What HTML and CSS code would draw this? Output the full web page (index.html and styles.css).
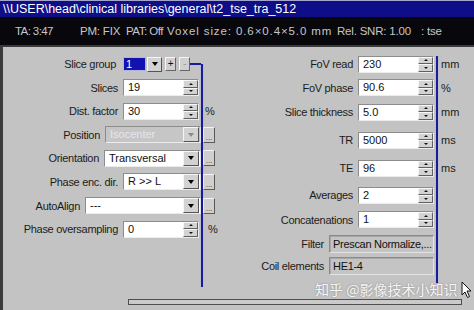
FILE: index.html
```html
<!DOCTYPE html>
<html lang="en">
<head>
    <meta charset="UTF-8">
    <meta name="viewport" content="width=device-width, initial-scale=1.0">
    <title>t2_tse_tra_512</title>
    <link rel="stylesheet" href="styles.css">
</head>
<body>
    <div class="window">
        <div class="titlebar">\\USER\head\clinical libraries\general\t2_tse_tra_512</div>

        <div class="infobar">
            <span class="ta">TA: 3:47</span>
            <span class="pm">PM: FIX</span>
            <span class="pat">PAT: Off</span>
            <span class="voxel">Voxel size: 0.6×0.4×5.0 mm</span>
            <span class="snr">Rel. SNR: 1.00</span>
            <span>: tse</span>
        </div>

        <div class="panel">
            <div class="columns">
                <!-- left column -->
                <div class="col col-left">
                    <div class="row">
                        <span class="label">Slice group</span>
                        <div class="group">
                            <div class="sel">1</div>
                            <div class="drop-btn"></div>
                            <div class="btn">+</div>
                            <div class="btn off">-</div>
                            <div class="conn"></div>
                        </div>
                    </div>

                    <div class="row">
                        <span class="label">Slices</span>
                        <div class="field w76"><span class="val">19</span><div class="spin"><i class="up"></i><i class="down"></i></div></div>
                    </div>

                    <div class="row">
                        <span class="label">Dist. factor</span>
                        <div class="field w76"><span class="val">30</span><div class="spin"><i class="up"></i><i class="down"></i></div></div>
                    </div>
                    <div class="aux unit">%</div>

                    <div class="row">
                        <span class="label">Position</span>
                        <div class="field combo disabled w96"><span class="val">Isocenter</span><div class="drop"></div></div>
                    </div>
                    <div class="aux"><div class="more">...</div></div>

                    <div class="row">
                        <span class="label">Orientation</span>
                        <div class="field combo w97"><span class="val">Transversal</span><div class="drop"></div></div>
                    </div>
                    <div class="aux"><div class="more">...</div></div>

                    <div class="row">
                        <span class="label">Phase enc. dir.</span>
                        <div class="field combo w78"><span class="val">R &gt;&gt; L</span><div class="drop"></div></div>
                    </div>
                    <div class="aux"><div class="more">...</div></div>

                    <div class="row">
                        <span class="label">AutoAlign</span>
                        <div class="field combo w116"><span class="val">---</span><div class="drop"></div></div>
                    </div>
                    <div class="aux"><div class="more">...</div></div>

                    <div class="row">
                        <span class="label">Phase oversampling</span>
                        <div class="field w76"><span class="val">0</span><div class="spin"><i class="up"></i><i class="down"></i></div></div>
                    </div>
                    <div class="aux unit far">%</div>

                    <div class="vline vline-left"></div>
                </div>

                <!-- right column -->
                <div class="col col-right">
                    <div class="row">
                        <span class="label">FoV read</span>
                        <div class="field w76"><span class="val">230</span><div class="spin"><i class="up"></i><i class="down"></i></div></div>
                    </div>
                    <div class="aux unit">mm</div>

                    <div class="row">
                        <span class="label">FoV phase</span>
                        <div class="field w76"><span class="val">90.6</span><div class="spin"><i class="up"></i><i class="down"></i></div></div>
                    </div>
                    <div class="aux unit">%</div>

                    <div class="row gap-s">
                        <span class="label">Slice thickness</span>
                        <div class="field w76"><span class="val">5.0</span><div class="spin"><i class="up"></i><i class="down"></i></div></div>
                    </div>
                    <div class="aux unit gap-s">mm</div>

                    <div class="row gap-l">
                        <span class="label">TR</span>
                        <div class="field w76"><span class="val">5000</span><div class="spin"><i class="up"></i><i class="down"></i></div></div>
                    </div>
                    <div class="aux unit gap-l">ms</div>

                    <div class="row gap-l">
                        <span class="label">TE</span>
                        <div class="field w76"><span class="val">96</span><div class="spin"><i class="up"></i><i class="down"></i></div></div>
                    </div>
                    <div class="aux unit gap-l">ms</div>

                    <div class="row gap-m">
                        <span class="label">Averages</span>
                        <div class="field w76"><span class="val">2</span><div class="spin"><i class="up"></i><i class="down"></i></div></div>
                    </div>

                    <div class="row gap-s">
                        <span class="label">Concatenations</span>
                        <div class="field w76"><span class="val">1</span><div class="spin"><i class="up"></i><i class="down"></i></div></div>
                    </div>

                    <div class="row gap-s">
                        <span class="label">Filter</span>
                        <div class="field readonly w105"><span class="val">Prescan Normalize,...</span></div>
                    </div>

                    <div class="row tight">
                        <span class="label">Coil elements</span>
                        <div class="field readonly w105"><span class="val">HE1-4</span></div>
                    </div>

                    <div class="vline vline-right"></div>
                </div>
            </div>

            <div class="hbar"></div>
        </div>

        <div class="watermark">知乎 @影像技术小知识</div>
        <svg class="cursor" width="11" height="18" viewBox="0 0 11 18">
            <path d="M1 1 L1 14 L4 11 L6.5 16.5 L8.5 15.5 L6 10 L10 10 Z" fill="#fff" stroke="#111" stroke-width="1" stroke-linejoin="round"/>
        </svg>
    </div>
</body>
</html>
```

FILE: styles.css
```css
body {
    margin: 0;
    font-family: "Liberation Sans", Arial, sans-serif;
    background: #c3c3c3;
}

.window {
    position: relative;
    width: 474px;
    height: 310px;
    overflow: hidden;
    display: flex;
    flex-direction: column;
    background: #c3c3c3;
}

.titlebar {
    height: 16px;
    line-height: 16px;
    border-top: 1px solid #a4a4cc;
    background: #0e0e88;
    color: #fff;
    font-size: 12.5px;
    padding-left: 3px;
    white-space: nowrap;
}

.infobar {
    height: 28px;
    background: #08080c;
    border-bottom: 2px solid #3a3a3a;
    color: #c6c6c6;
    font-size: 11.5px;
    letter-spacing: -0.2px;
    display: flex;
    align-items: center;
    padding-left: 15px;
    white-space: nowrap;
}

.infobar span { flex-shrink: 0; }
.infobar .ta { width: 65px; letter-spacing: -0.6px; }
.infobar .pm { width: 46px; }
.infobar .pat { width: 41px; letter-spacing: -0.5px; }
.infobar .voxel { width: 170px; letter-spacing: 0.9px; }
.infobar .snr { width: 84px; }

.panel {
    flex: 1;
    display: flex;
    flex-direction: column;
    border-left: 3px solid #3b3b3b;
    padding-top: 8.5px;
}

.columns {
    flex: 1;
    display: flex;
}

.col {
    display: grid;
    row-gap: 6.5px;
    align-items: center;
}

.col-left {
    width: 229px;
    grid-template-columns: 198px 2px 1fr;
    grid-template-rows: repeat(8, auto) 1fr;
    row-gap: 6.6px;
    padding-bottom: 12px;
}

.col-right {
    flex: 1;
    grid-template-columns: 204px 2px 1fr;
    grid-template-rows: repeat(9, auto) 1fr;
    padding-bottom: 16px;
}

.row {
    grid-column: 1;
    height: 17px;
    display: flex;
    align-items: center;
    justify-content: flex-end;
    gap: 5px;
    font-size: 11px;
    letter-spacing: -0.3px;
    color: #1b1b1b;
    white-space: nowrap;
}

.gap-s { margin-top: 1px; }
.gap-m { margin-top: 3.5px; }
.gap-l { margin-top: 4.5px; }
.tight { margin-top: -2px; }

.aux {
    grid-column: 3;
    display: flex;
    align-items: center;
    font-size: 11px;
    color: #1b1b1b;
}

.unit {
    padding-left: 2px;
}

.unit.far {
    padding-left: 5px;
}

.col-right .unit {
    padding-left: 3px;
}

.vline {
    grid-column: 2;
    grid-row: 1 / -1;
    align-self: stretch;
    background: #1a1a9c;
    box-shadow: 0 0 1px #8c8cf0;
}

.vline-left {
    margin-top: 8px;
}

.vline-right {
    margin-top: 0;
}

/* inputs */
.field {
    box-sizing: border-box;
    height: 17px;
    background: #fff;
    border: 1px solid;
    border-color: #8c8c8c #ececec #ececec #8c8c8c;
    display: flex;
    align-items: stretch;
    margin-right: 2px;
    letter-spacing: 0;
}

.field.combo {
    margin-right: 0;
}

.val {
    flex: 1;
    padding-left: 4px;
    line-height: 15px;
    font-size: 11px;
    color: #111;
    overflow: hidden;
}

.w76 { width: 76px; }
.w78 { width: 78px; }
.w96 { width: 96px; }
.w97 { width: 97px; }
.w105 { width: 105px; }
.w116 { width: 116px; }

.field.disabled {
    background: #c6c6c6;
}

.field.disabled .val {
    color: #e6e6e6;
}

.field.readonly {
    background: #c4c4c4;
    border-color: #8a8a8a #e4e4e4 #e4e4e4 #8a8a8a;
    box-shadow: inset 1px 1px 0 #a8a8a8;
    height: 18px;
}

.field.readonly .val {
    line-height: 16px;
    padding-left: 3px;
    font-size: 11px;
    letter-spacing: -0.3px;
}

.spin {
    width: 15px;
    display: flex;
    flex-direction: column;
    background: #c8c8c8;
}

.spin i {
    flex: 1;
    display: flex;
    align-items: center;
    justify-content: center;
    border: 1px solid;
    border-color: #f6f6f6 #606060 #606060 #f6f6f6;
    background: #d3d3d3;
}

.spin i::after {
    content: "";
    border-left: 2px solid transparent;
    border-right: 2px solid transparent;
}

.spin .up::after {
    border-bottom: 2px solid #111;
}

.spin .down::after {
    border-top: 2px solid #111;
}

.drop {
    width: 14px;
    margin: 0 1px 0 0;
    display: flex;
    align-items: center;
    justify-content: center;
    background: #d2d2d2;
    border: 1px solid;
    border-color: #f6f6f6 #555 #555 #f6f6f6;
}

.drop::after,
.drop-btn::after {
    content: "";
    border-top: 4px solid #000;
    border-left: 3.5px solid transparent;
    border-right: 3.5px solid transparent;
}

.field.disabled .drop::after {
    border-top-color: #8a8a8a;
}

.more {
    box-sizing: border-box;
    width: 12px;
    height: 16px;
    background: #cfcfcf;
    border: 1px solid;
    border-color: #f4f4f4 #5a5a5a #5a5a5a #f4f4f4;
    font-size: 8px;
    line-height: 20px;
    text-align: center;
    color: #333;
    overflow: hidden;
}

/* slice group controls */
.label + .group {
    margin-left: 2px;
}

.group {
    display: flex;
    align-items: center;
    gap: 2px;
}

.sel {
    box-sizing: border-box;
    width: 23px;
    height: 14px;
    background: #1212b0;
    border: 1px solid #b4b4d8;
    color: #fff;
    font-size: 11px;
    line-height: 12px;
    padding-left: 2px;
}

.drop-btn {
    box-sizing: border-box;
    width: 15px;
    height: 15px;
    margin-left: -1px;
    display: flex;
    align-items: center;
    justify-content: center;
    background: #d2d2d2;
    border: 1px solid;
    border-color: #f6f6f6 #555 #555 #f6f6f6;
}

.btn {
    box-sizing: border-box;
    width: 11px;
    height: 14px;
    margin-left: 1px;
    background: #d0d0d0;
    border: 1px solid;
    border-color: #f6f6f6 #666 #666 #f6f6f6;
    font-size: 10px;
    line-height: 11px;
    text-align: center;
    color: #111;
}

.btn.off {
    color: #9a9a9a;
}

.conn {
    width: 11px;
    height: 2px;
    margin-left: -2px;
    background: #1a1a9c;
}

.hbar {
    height: 4px;
    margin: 0 12px 5px 125px;
    border: 1px solid #4e4e4e;
    background: #cacaca;
}

/* overlays */
.watermark {
    position: absolute;
    left: 315px;
    top: 281px;
    font-family: "Noto Sans CJK SC", sans-serif;
    font-size: 14px;
    line-height: 17px;
    color: rgba(255, 255, 255, 0.92);
    text-shadow: 0 0 2px rgba(90, 90, 90, 0.6);
    white-space: nowrap;
}

.cursor {
    position: absolute;
    left: 461px;
    top: 281px;
}
```
